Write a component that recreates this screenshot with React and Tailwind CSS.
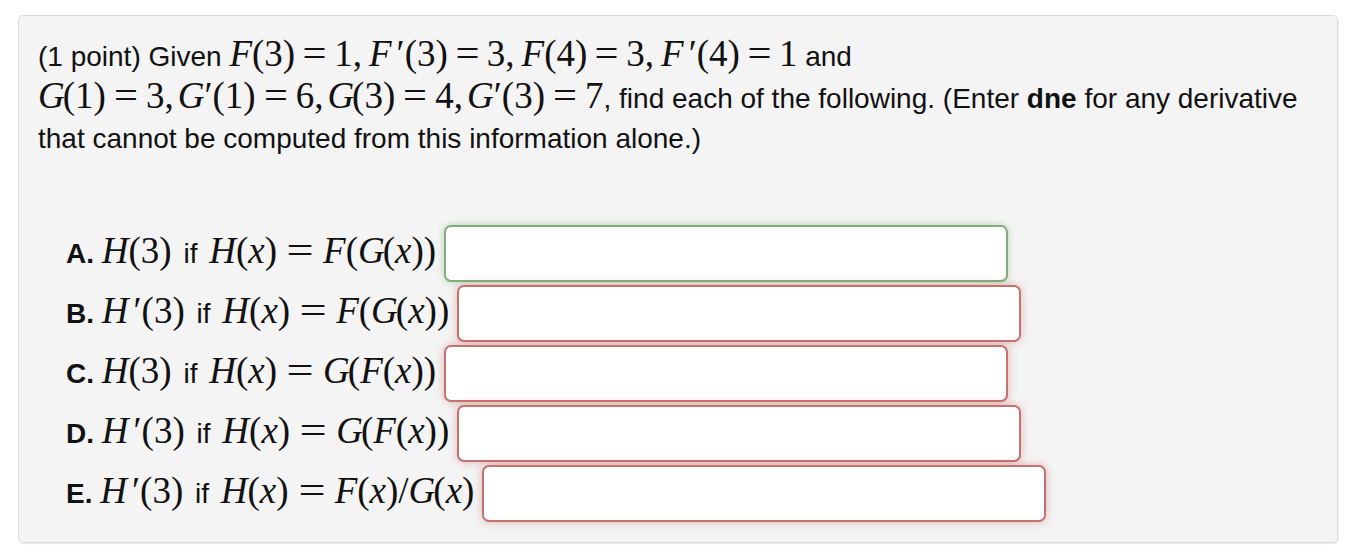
import React from "react"

// Inline math, rendered with a serif face
const M = ({ children }) => (
  <span className="font-['Liberation_Serif',serif] text-[37px] leading-none">{children}</span>
)
const V = ({ children }) => <i>{children}</i>
const G = () => <i className="mr-[-2px]">G</i>
const P = () => <span className="ml-[5px]">′</span>
const Eq = () => <span className="inline-block w-[46px] text-center scale-x-[1.3]">=</span>
const EqL = () => <span className="inline-block w-[39px] text-center scale-x-[1.15]">=</span>
const EqS = () => <span className="inline-block w-[40px] text-center scale-x-[1.15]">=</span>
const Sep = () => <span className="mr-[7px]">,</span>
const SepS = () => <span className="mr-[4px]">,</span>

const answers = [
  {
    label: "A.",
    lhs: (
      <>
        <V>H</V>(3)
      </>
    ),
    rhs: (
      <>
        <V>F</V>(<G />(<V>x</V>))
      </>
    ),
    ok: true,
  },
  {
    label: "B.",
    lhs: (
      <>
        <V>H</V><P />(3)
      </>
    ),
    rhs: (
      <>
        <V>F</V>(<G />(<V>x</V>))
      </>
    ),
  },
  {
    label: "C.",
    lhs: (
      <>
        <V>H</V>(3)
      </>
    ),
    rhs: (
      <>
        <G />(<V>F</V>(<V>x</V>))
      </>
    ),
  },
  {
    label: "D.",
    lhs: (
      <>
        <V>H</V><P />(3)
      </>
    ),
    rhs: (
      <>
        <G />(<V>F</V>(<V>x</V>))
      </>
    ),
  },
  {
    label: "E.",
    lhs: (
      <>
        <V>H</V><P />(3)
      </>
    ),
    rhs: (
      <>
        <V>F</V>(<V>x</V>)/<G />(<V>x</V>)
      </>
    ),
  },
]

export default function App() {
  return (
    <div className="min-h-screen bg-white pt-[15px] pl-[18px] font-['Liberation_Sans',Arial,sans-serif] text-[#111]">
      <div className="w-[1320px] h-[528px] bg-[#f4f4f4] border border-[#dcdcdc] rounded-[5px] shadow-[1px_1px_1px_rgba(0,0,0,0.08)] pl-[19px] pr-[12px] pt-[19px]">
        <p className="text-[28px] leading-[40px] whitespace-nowrap">
          (1 point) Given{" "}
          <M>
            <V>F</V>(3)<EqL />1<Sep />
            <V>F</V><P />(3)<EqL />3<Sep />
            <V>F</V>(4)<EqL />3<Sep />
            <V>F</V><P />(4)<EqL />1
          </M>{" "}
          and
          <br />
          <M>
            <G />(1)<EqS />3<SepS />
            <V>G</V>′(1)<EqS />6<SepS />
            <G />(3)<EqS />4<SepS />
            <V>G</V>′(3)<EqS />7
          </M>
          , find each of the following. (Enter <b>dne</b> for any derivative
          <br />
          that cannot be computed from this information alone.)
        </p>

        <div className="mt-[66px] ml-[28px] flex flex-col gap-[3px]">
          {answers.map((a) => (
            <div key={a.label} className="flex items-center h-[57px]">
              <span className="text-[28px] whitespace-nowrap">
                <b>{a.label}</b> <M>{a.lhs}</M> <span className="mx-[4px]">if</span>{" "}
                <M>
                  <V>H</V>(<V>x</V>)<Eq />
                  {a.rhs}
                </M>
              </span>
              <input
                type="text"
                className={
                  a.ok
                    ? "ml-[8px] w-[564px] h-[57px] bg-white rounded-[7px] border-2 border-[#80ad78] shadow-[0_0_7px_rgba(110,170,100,0.45)] outline-none"
                    : "ml-[8px] w-[564px] h-[57px] bg-white rounded-[7px] border-2 border-[#c47270] shadow-[0_0_8px_rgba(200,100,100,0.45)] outline-none"
                }
              />
            </div>
          ))}
        </div>
      </div>
    </div>
  )
}
